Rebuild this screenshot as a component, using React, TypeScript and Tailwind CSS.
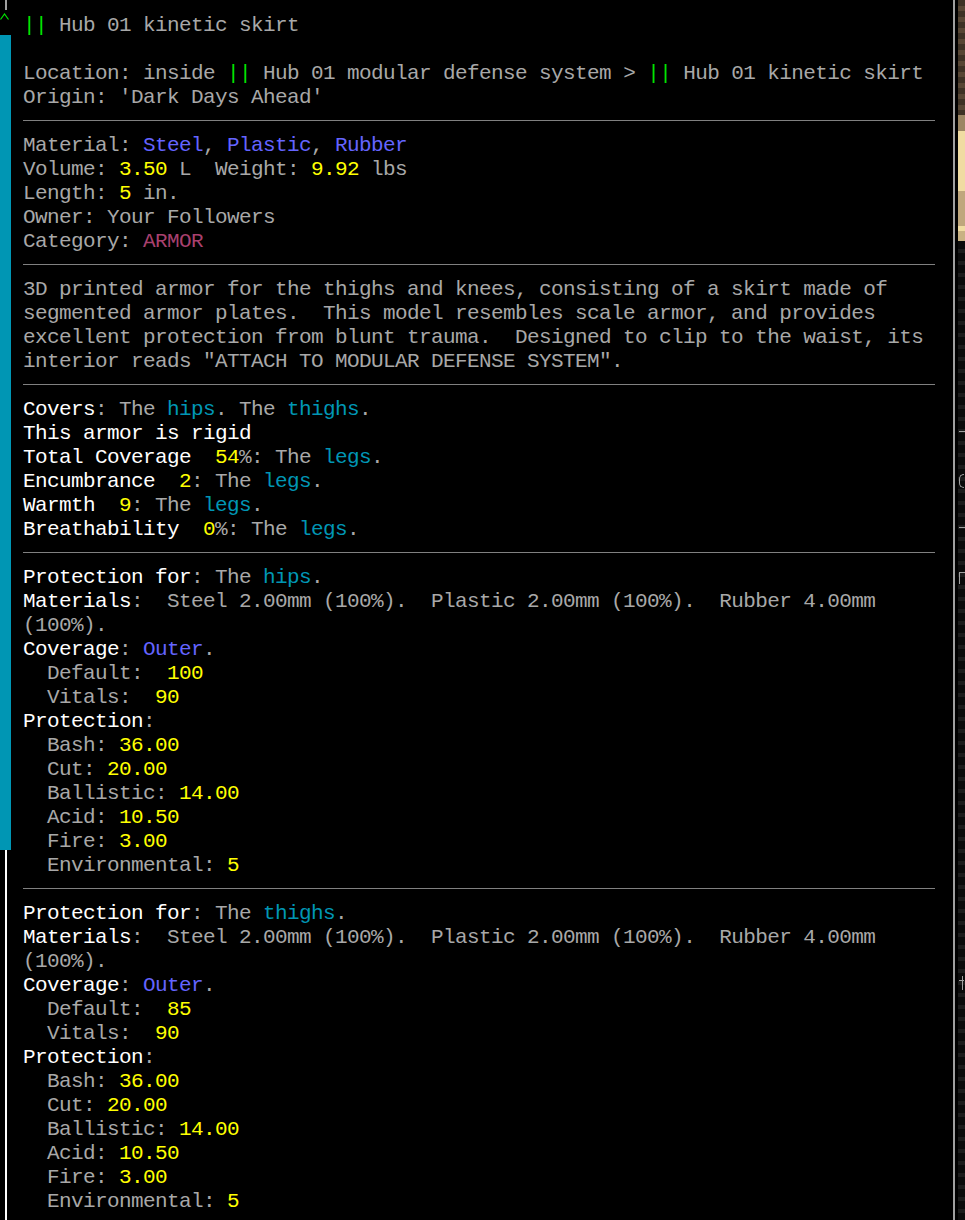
import React from 'react'

// colour keys for the terminal palette
const COLORS = {
  g: 'text-[#a8a8a8]',
  w: 'text-white',
  y: 'text-[#ffff00]',
  c: 'text-[#0096b4]',
  b: 'text-[#6464ff]',
  l: 'text-[#00e400]',
  m: 'text-[#a8406e]',
} as const

type Key = keyof typeof COLORS
type Seg = [string, Key]
type Row = Seg[] | 'sep' | 'blank'

const legs = (label: string, val: string, tail: string): Seg[] => [
  [label, 'w'],
  [val, 'y'],
  [tail, 'g'],
  ['legs', 'c'],
  ['.', 'g'],
]

function protectionBlock(part: string, def: string): Row[] {
  return [
    [['Protection for', 'w'], [': The ', 'g'], [part, 'c'], ['.', 'g']],
    [['Materials', 'w'], [':  Steel 2.00mm (100%).  Plastic 2.00mm (100%).  Rubber 4.00mm', 'g']],
    [['(100%).', 'g']],
    [['Coverage', 'w'], [': ', 'g'], ['Outer', 'b'], ['.', 'g']],
    [['  Default:  ', 'g'], [def, 'y']],
    [['  Vitals:  ', 'g'], ['90', 'y']],
    [['Protection', 'w'], [':', 'g']],
    [['  Bash: ', 'g'], ['36.00', 'y']],
    [['  Cut: ', 'g'], ['20.00', 'y']],
    [['  Ballistic: ', 'g'], ['14.00', 'y']],
    [['  Acid: ', 'g'], ['10.50', 'y']],
    [['  Fire: ', 'g'], ['3.00', 'y']],
    [['  Environmental: ', 'g'], ['5', 'y']],
  ]
}

const rows: Row[] = [
  [['||', 'l'], [' Hub 01 kinetic skirt', 'g']],
  'blank',
  [
    ['Location: inside ', 'g'],
    ['||', 'l'],
    [' Hub 01 modular defense system > ', 'g'],
    ['||', 'l'],
    [' Hub 01 kinetic skirt', 'g'],
  ],
  [["Origin: 'Dark Days Ahead'", 'g']],
  'sep',
  [['Material: ', 'g'], ['Steel', 'b'], [', ', 'g'], ['Plastic', 'b'], [', ', 'g'], ['Rubber', 'b']],
  [['Volume: ', 'g'], ['3.50', 'y'], [' L  Weight: ', 'g'], ['9.92', 'y'], [' lbs', 'g']],
  [['Length: ', 'g'], ['5', 'y'], [' in.', 'g']],
  [['Owner: Your Followers', 'g']],
  [['Category: ', 'g'], ['ARMOR', 'm']],
  'sep',
  [['3D printed armor for the thighs and knees, consisting of a skirt made of', 'g']],
  [['segmented armor plates.  This model resembles scale armor, and provides', 'g']],
  [['excellent protection from blunt trauma.  Designed to clip to the waist, its', 'g']],
  [['interior reads "ATTACH TO MODULAR DEFENSE SYSTEM".', 'g']],
  'sep',
  [['Covers', 'w'], [': The ', 'g'], ['hips', 'c'], ['. The ', 'g'], ['thighs', 'c'], ['.', 'g']],
  [['This armor is rigid', 'w']],
  legs('Total Coverage  ', '54', '%: The '),
  legs('Encumbrance  ', '2', ': The '),
  legs('Warmth  ', '9', ': The '),
  legs('Breathability  ', '0', '%: The '),
  'sep',
  ...protectionBlock('hips', '100'),
  'sep',
  ...protectionBlock('thighs', '85'),
]

function LeftRail() {
  return (
    <div className="flex w-[12px] shrink-0 flex-col">
      <div className="ml-[5px] h-[10px] w-[2px] bg-[#a0a0a0]" />
      <svg className="mt-[3px] h-[7px] w-[10px]" viewBox="0 0 10 7" fill="none">
        <polyline points="0.5,6.5 4.5,1 8.5,6.5" stroke="#00e400" strokeWidth="1.2" />
      </svg>
      <div className="mt-[15px] h-[815px] w-[11px] bg-[#0096b4]" />
      <div className="ml-[5px] w-[2px] flex-1 bg-white" />
    </div>
  )
}

// sliver of the neighbouring window on the far right
function RightSliver() {
  return (
    <div className="relative flex w-[7px] shrink-0 flex-col">
      <div className="h-[115px] bg-[repeating-linear-gradient(180deg,#3e3225_0px,#3e3225_6px,#574634_6px,#574634_11px)]" />
      <div className="h-[16px] bg-[#9c8663]" />
      <div className="h-[60px] bg-[#f0dca2]" />
      <div className="h-[35px] bg-[#bfa77c]" />
      <div className="h-[5px] bg-[#f0dca2]" />
      <div className="h-[10px] bg-[#c9b283]" />
      <div className="flex-1 bg-[repeating-linear-gradient(180deg,#0b0b0b_0px,#0b0b0b_8px,#1c1c1c_8px,#1c1c1c_12px)]" />
      <div className="absolute left-[1px] top-[431px] h-px w-[6px] bg-[#a0a0a0]" />
      <div className="absolute left-[1px] top-[474px] h-[14px] w-[5px] rounded-l-full border-y border-l border-[#a0a0a0]" />
      <div className="absolute left-[1px] top-[527px] h-px w-[6px] bg-[#a0a0a0]" />
      <div className="absolute left-[1px] top-[572px] h-[12px] w-[6px] border-l border-t border-[#a0a0a0]" />
      <div className="absolute left-[4px] top-[976px] h-[14px] w-px bg-[#a0a0a0]" />
      <div className="absolute left-[1px] top-[980px] h-px w-[5px] bg-[#a0a0a0]" />
    </div>
  )
}

export default function App() {
  return (
    <div
      className="flex h-[1220px] w-[965px] overflow-hidden bg-black text-[21px] leading-6 tracking-[-0.6px]"
      style={{ fontFamily: '"Liberation Mono", "DejaVu Sans Mono", monospace' }}
    >
      <LeftRail />
      <div className="w-[923px] shrink-0 pl-[11px] pt-[12px]">
        {rows.map((row, i) => {
          if (row === 'sep') {
            return (
              <div key={i} className="flex h-6 items-center">
                <div className="h-px w-full bg-[#808080]" />
              </div>
            )
          }
          if (row === 'blank') return <div key={i} className="h-6" />
          return (
            <div key={i} className="h-6 whitespace-pre pt-[2px]">
              {row.map(([text, c], j) => (
                <span key={j} className={COLORS[c]}>
                  {text}
                </span>
              ))}
            </div>
          )
        })}
      </div>
      <div className="w-[18px] shrink-0" />
      <div className="w-[2px] shrink-0 bg-[#a0a0a0]" />
      <div className="w-[3px] shrink-0" />
      <RightSliver />
    </div>
  )
}
